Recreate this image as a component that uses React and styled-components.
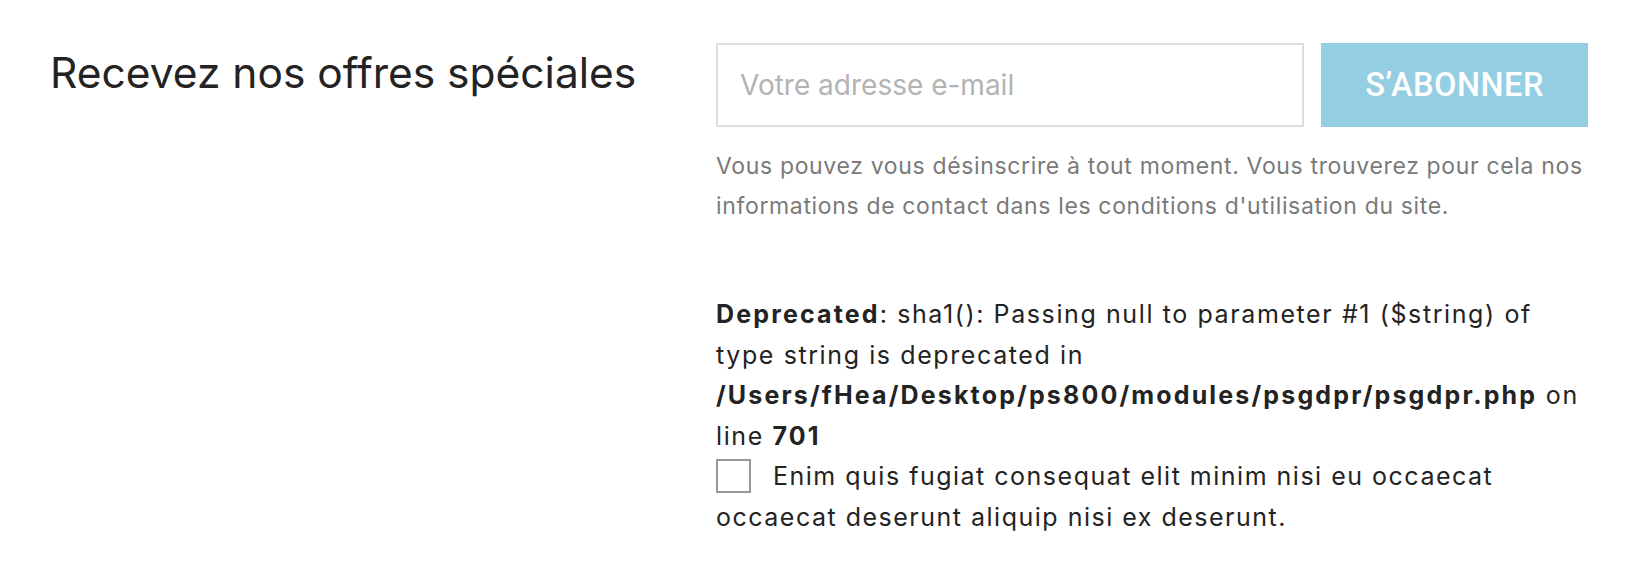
import React from 'react';
import styled, { createGlobalStyle } from 'styled-components';

const GlobalStyle = createGlobalStyle`
  html, body {
    margin: 0;
    padding: 0;
    background: #fff;
  }
  body {
    font-family: Inter, "Noto Sans", "Liberation Sans", sans-serif;
    color: #232323;
  }
`;

const Section = styled.section`
  display: flex;
  padding: 43px 0 0 50px;
`;

const TitleCol = styled.div`
  width: 666px;
  flex-shrink: 0;
`;

const Title = styled.h4`
  margin: 0;
  padding-top: 4px;
  font-size: 42.5px;
  font-weight: 400;
  line-height: 1.2;
  color: #232323;
`;

const FormCol = styled.div`
  width: 872px;
  display: flex;
  flex-direction: column;
`;

const InputRow = styled.form`
  display: flex;
  gap: 17px;
  height: 84px;
`;

const EmailInput = styled.input`
  flex: 1;
  min-width: 0;
  box-sizing: border-box;
  height: 84px;
  margin: 0;
  padding: 0 22px;
  border: 2px solid #dedede;
  border-radius: 0;
  outline: none;
  font-family: inherit;
  font-size: 28px;
  color: #232323;

  &::placeholder {
    color: #b3b3b3;
  }
`;

const SubmitButton = styled.button`
  width: 267px;
  height: 84px;
  border: none;
  margin: 0;
  padding: 0;
  background: #94cee2;
  color: #fff;
  font-family: Roboto, "Liberation Sans", sans-serif;
  font-weight: 500;
  font-size: 32.5px;
  letter-spacing: 0.5px;
  cursor: pointer;
`;

const Hint = styled.p`
  margin: 20px 0 0;
  font-size: 23px;
  line-height: 39.5px;
  letter-spacing: 0.65px;
  color: #7a7a7a;
`;

const Notice = styled.div`
  margin-top: 68px;
  font-size: 25px;
  line-height: 40.5px;
  letter-spacing: 1.6px;
  color: #232323;

  b {
    font-weight: 700;
    letter-spacing: 2.15px;
  }
`;

const ConsentLabel = styled.label`
  display: block;
  letter-spacing: 1.5px;
  color: #232323;
`;

const Box = styled.span`
  display: inline-block;
  box-sizing: border-box;
  width: 35px;
  height: 34px;
  border: 2.5px solid #979797;
  vertical-align: -8px;
  margin-right: 22px;
`;

export default function App() {
  return (
    <>
      <GlobalStyle />
      <Section>
        <TitleCol>
          <Title>Recevez nos offres spéciales</Title>
        </TitleCol>
        <FormCol>
          <InputRow onSubmit={(e) => e.preventDefault()}>
            <EmailInput type="email" placeholder="Votre adresse e-mail" />
            <SubmitButton type="submit">S’ABONNER</SubmitButton>
          </InputRow>
          <Hint>
            Vous pouvez vous désinscrire à tout moment. Vous trouverez pour cela nos informations de contact dans les conditions d'utilisation du site.
          </Hint>
          <Notice>
            <b>Deprecated</b>: sha1(): Passing null to parameter #1 ($string) of type string is deprecated in <b>/Users/fHea/Desktop/ps800/modules/psgdpr/psgdpr.php</b> on line <b>701</b>
            <ConsentLabel>
              <Box />
              Enim quis fugiat consequat elit minim nisi eu occaecat occaecat deserunt aliquip nisi ex deserunt.
            </ConsentLabel>
          </Notice>
        </FormCol>
      </Section>
    </>
  );
}
